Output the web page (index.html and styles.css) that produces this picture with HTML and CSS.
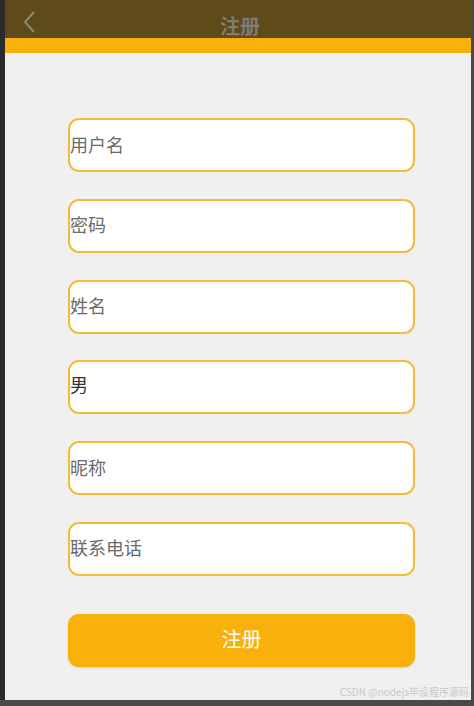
FILE: index.html
```html
<!DOCTYPE html>
<html lang="zh">
<head>
<meta charset="utf-8">
<title>注册</title>
<link rel="stylesheet" href="styles.css">
</head>
<body>
<div class="frame">
  <div class="edge-left"></div>
  <div class="screen">
    <header class="topbar">
      <svg class="back" width="14" height="24" viewBox="0 0 14 24"><path d="M12 2 L3 12 L12 22" fill="none" stroke="#8a8a7a" stroke-width="2"/></svg>
      <h1 class="title">注册</h1>
    </header>
    <div class="stripe"></div>
    <main class="form">
      <div class="field"><span class="ph">用户名</span></div>
      <div class="field"><span class="ph">密码</span></div>
      <div class="field"><span class="ph">姓名</span></div>
      <div class="field field-value"><span class="val">男</span></div>
      <div class="field"><span class="ph">昵称</span></div>
      <div class="field"><span class="ph">联系电话</span></div>
      <button class="submit">注册</button>
    </main>
    <div class="watermark">CSDN @nodejs毕设程序源码</div>
  </div>
  <div class="edge-right"></div>
</div>
<div class="bottombar"></div>
</body>
</html>
```
FILE: styles.css
```css
html, body {
  margin: 0;
  padding: 0;
  height: 706px;
  overflow: hidden;
  font-family: "Noto Sans CJK SC", "Liberation Sans", sans-serif;
}
.frame {
  display: flex;
  height: 700px;
}
.edge-left {
  width: 5px;
  background: #2b2b2b;
}
.edge-right {
  width: 3px;
  background: #4a4a4a;
}
.screen {
  flex: 1;
  background: #f0f0f0;
  display: flex;
  flex-direction: column;
  position: relative;
}
.topbar {
  height: 38px;
  background: #5f4a1a;
  display: flex;
  align-items: center;
  justify-content: center;
  position: relative;
}
.back {
  position: absolute;
  left: 17px;
  top: 10px;
}
.title {
  margin: 0;
  font-size: 20px;
  font-weight: bold;
  color: #7f7c73;
  padding-top: 12px;
  margin-left: 4px;
}
.stripe {
  height: 15px;
  background: #f8b00a;
}
.form {
  display: flex;
  flex-direction: column;
  gap: 26.8px;
  padding: 65px 0 0 63px;
}
.field {
  box-sizing: border-box;
  width: 347px;
  height: 54px;
  border: 2px solid #f2bb3e;
  border-radius: 11px;
  background: #fff;
  display: flex;
  align-items: center;
}
.ph {
  font-size: 18px;
  color: #6a6a6a;
  margin-top: -3px;
}
.val {
  font-size: 18px;
  color: #333;
  margin-top: -6px;
}
.submit {
  margin-top: 11px;
  box-sizing: border-box;
  width: 347px;
  height: 53px;
  border: none;
  border-radius: 11px;
  background: #f8b00a;
  color: #fff;
  font-family: "Noto Sans CJK SC", "Liberation Sans", sans-serif;
  font-size: 20px;
  padding: 0 0 4px;
  box-shadow: 0 1px 2px rgba(0,0,0,0.12);
}
.watermark {
  position: absolute;
  right: 2px;
  bottom: 1px;
  font-size: 10px;
  color: #c8c8c8;
}
.bottombar {
  height: 6px;
  background: #4a4a4a;
}
```
